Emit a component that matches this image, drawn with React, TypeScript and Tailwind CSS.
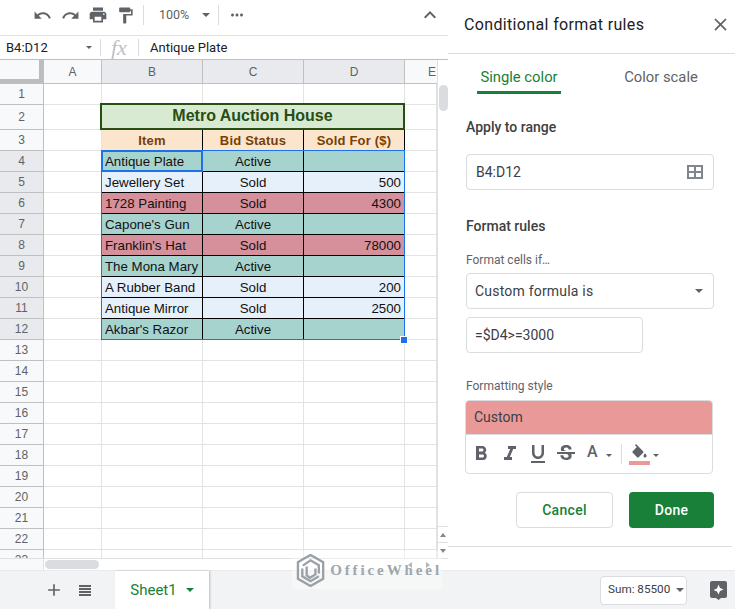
import { MdUndo, MdRedo, MdPrint, MdFormatPaint, MdKeyboardArrowUp, MdClose, MdAdd, MdFormatBold, MdFormatItalic, MdFormatUnderlined, MdStrikethroughS, MdMoreHoriz } from "react-icons/md";

const TEAL = "bg-[#a6d3cd]";
const BLUE = "bg-[#e6f0fb]";
const PINK = "bg-[#d5909c]";

const ROWS = [
    { item: "Antique Plate", status: "Active", sold: "", bg: TEAL },
    { item: "Jewellery Set", status: "Sold", sold: "500", bg: BLUE },
    { item: "1728 Painting", status: "Sold", sold: "4300", bg: PINK },
    { item: "Capone's Gun", status: "Active", sold: "", bg: TEAL },
    { item: "Franklin's Hat", status: "Sold", sold: "78000", bg: PINK },
    { item: "The Mona Mary", status: "Active", sold: "", bg: TEAL },
    { item: "A Rubber Band", status: "Sold", sold: "200", bg: BLUE },
    { item: "Antique Mirror", status: "Sold", sold: "2500", bg: BLUE },
    { item: "Akbar's Razor", status: "Active", sold: "", bg: TEAL },
];

const LINE = "border-r border-b border-[#e2e3e3]";
const BLACK = "border-r border-b border-black";

function Caret({ className }: { className: string }) {
    return <span className={"block w-0 h-0 border-x-[4px] border-x-transparent border-t-[4px] " + className} />;
}

function RowNum({ n }: { n: number }) {
    const selected = n >= 4 && n <= 12;
    return (
        <div className={"w-[44px] shrink-0 flex items-center justify-center text-[12px] text-[#5f6368] border-r border-b border-[#c0c0c0] " + (selected ? "bg-[#e8eaed]" : "bg-[#f8f9fa]")}>
            {n}
        </div>
    );
}

function SheetRow({ n }: { n: number }) {
    const height = n === 2 ? "h-[25px]" : "h-[21px]";
    return (
        <div className={"flex shrink-0 " + height}>
            <RowNum n={n} />
            <div className={"w-[58px] shrink-0 " + LINE} />
            {n === 1 || n > 12 ? (
                <>
                    <div className={"w-[101px] shrink-0 " + LINE} />
                    <div className={"w-[101px] shrink-0 " + LINE} />
                    <div className={"w-[101px] shrink-0 " + LINE} />
                </>
            ) : null}
            {n === 2 && (
                <div className="w-[305px] h-[27px] shrink-0 -ml-[2px] -mt-[2px] pb-[2px] z-10 flex items-center justify-center border-2 border-[#274e13] bg-[#d9ead3] text-[16px] font-bold text-[#274e13]">
                    Metro Auction House
                </div>
            )}
            {n === 3 && (
                <>
                    {["Item", "Bid Status", "Sold For ($)"].map((h) => (
                        <div key={h} className={"w-[101px] shrink-0 flex items-center justify-center pt-[2px] bg-[#fce5cd] text-[13px] font-bold tracking-[0.2px] text-[#783f04] " + BLACK}>
                            {h}
                        </div>
                    ))}
                </>
            )}
            {n >= 4 && n <= 12 && <DataCells n={n} />}
            <div className={"w-[32px] shrink-0 " + LINE} />
        </div>
    );
}

function DataCells({ n }: { n: number }) {
    const row = ROWS[n - 4];
    return (
        <>
            <div className={"w-[101px] shrink-0 flex items-center pl-[3px] pt-[2px] text-[13.3px] whitespace-nowrap overflow-hidden text-[#111] " + row.bg + " " + BLACK}>{row.item}</div>
            <div className={"w-[101px] shrink-0 flex items-center justify-center pt-[2px] text-[13.3px] text-[#111] " + row.bg + " " + BLACK}>{row.status}</div>
            <div className={"w-[101px] shrink-0 flex items-center justify-end pr-[3px] pt-[2px] text-[13.3px] text-[#111] " + row.bg + " " + BLACK}>{row.sold}</div>
        </>
    );
}

function Sheet() {
    const rows = Array.from({ length: 23 }, (_, i) => i + 1);
    return (
        <div className="relative flex-1 flex min-h-0 font-['Liberation_Sans',sans-serif]">
            <div className="w-[437px] shrink-0 overflow-hidden relative flex flex-col">
                {/* Column headers */}
                <div className="flex h-[24px] shrink-0 text-[12px] text-[#5f6368]">
                    <div className="w-[44px] shrink-0 bg-[#f8f9fa] border-r border-b border-[#c0c0c0] relative">
                        <div className="absolute right-0 top-0 bottom-0 w-[4px] bg-[#bdbdbd]" />
                        <div className="absolute left-0 right-0 bottom-0 h-[4px] bg-[#bdbdbd]" />
                    </div>
                    <div className="w-[58px] shrink-0 flex items-center justify-center bg-[#f8f9fa] border-r border-b border-[#c0c0c0]">A</div>
                    {["B", "C", "D"].map((c) => (
                        <div key={c} className="w-[101px] shrink-0 flex items-center justify-center bg-[#e8eaed] border-r border-b border-[#c0c0c0]">{c}</div>
                    ))}
                    <div className="w-[32px] shrink-0 flex items-center justify-end pr-[1px] bg-[#f8f9fa] border-b border-[#c0c0c0]">E</div>
                </div>
                {rows.map((n) => <SheetRow key={n} n={n} />)}
                {/* Selection over B4:D12 */}
                <div className="absolute left-[101px] top-[90px] w-[304px] h-[190px] border-[1.5px] border-[#1a73e8] pointer-events-none z-20" />
                <div className="absolute left-[101px] top-[90px] w-[102px] h-[22px] border-2 border-[#1a73e8] pointer-events-none z-20" />
                <div className="absolute left-[400px] top-[276px] w-[8px] h-[8px] bg-[#1a73e8] border border-white z-30" />
            </div>
            {/* Vertical scrollbar */}
            <div className="flex-1 flex flex-col items-center bg-white border-l border-[#e0e0e0]">
                <div className="mt-[25px] w-[9px] h-[26px] rounded-full bg-[#dadce0]" />
                <div className="mt-auto w-full h-[16px] flex items-center justify-center border-t border-[#e0e0e0]">
                    <span className="block w-0 h-0 border-x-[3px] border-x-transparent border-b-[4px] border-b-[#80868b]" />
                </div>
                <div className="w-full h-[16px] flex items-center justify-center border-t border-[#e0e0e0]">
                    <Caret className="border-t-[#80868b] !border-x-[3px]" />
                </div>
            </div>
        </div>
    );
}

function FillIcon() {
    return (
        <svg viewBox="0 0 24 20" className="w-[19px] h-[16px] fill-[#5f6368]">
            <path d="M16.56 8.94 7.62 0 6.21 1.41l2.38 2.38-5.15 5.15a1.49 1.49 0 0 0 0 2.12l5.5 5.5c.29.29.68.44 1.06.44s.77-.15 1.06-.44l5.5-5.5c.59-.58.59-1.53 0-2.12zM19 11.5s-2 2.17-2 3.5c0 1.1.9 2 2 2s2-.9 2-2c0-1.33-2-3.5-2-3.5z" />
        </svg>
    );
}

function Panel() {
    return (
        <div className="w-[287px] shrink-0 flex flex-col bg-white font-['Roboto',sans-serif] text-[#3c4043]">
            <div className="h-[54px] shrink-0 flex items-center justify-between pl-[16px] pr-[4px] pb-[4px] border-b border-[#dadce0]">
                <span className="text-[16px] tracking-[0.35px] text-[#202124]">Conditional format rules</span>
                <MdClose className="text-[#5f6368]" size={21} />
            </div>
            {/* Tabs */}
            <div className="flex h-[40px] shrink-0 pl-[29px] text-[14.8px]">
                <div className="w-[84px] flex items-center justify-center whitespace-nowrap text-[#188038] border-b-[3px] border-[#188038] pt-[10px]">Single color</div>
                <div className="ml-[64px] w-[72px] flex items-center justify-center text-[#5f6368] pt-[7px] whitespace-nowrap">Color scale</div>
            </div>
            <div className="flex flex-col px-[18px] pr-[21px]">
                <div className="mt-[23px] h-[20px] flex items-center text-[14px] font-medium">Apply to range</div>
                <div className="mt-[17px] h-[36px] flex items-center justify-between pl-[9px] pr-[10px] border border-[#dadce0] rounded text-[14px]">
                    <span>B4:D12</span>
                    <span className="grid grid-cols-2 gap-[1.5px] w-[16px] h-[14px] p-[2px] bg-[#80868b]">
                        <i className="bg-white" /><i className="bg-white" /><i className="bg-white" /><i className="bg-white" />
                    </span>
                </div>
                <div className="mt-[26px] h-[20px] flex items-center text-[14px] font-medium">Format rules</div>
                <div className="mt-[16px] h-[16px] flex items-center text-[12px] text-[#5f6368]">Format cells if…</div>
                <div className="mt-[5px] h-[36px] flex items-center justify-between pl-[8px] pr-[10px] border border-[#dadce0] rounded text-[14px] tracking-[0.2px]">
                    <span>Custom formula is</span>
                    <Caret className="border-t-[#5f6368]" />
                </div>
                <div className="mt-[8px] w-[177px] h-[36px] flex items-center px-[8px] border border-[#dadce0] rounded text-[14px]">=$D4&gt;=3000</div>
                <div className="mt-[25px] h-[16px] flex items-center text-[12px] text-[#5f6368]">Formatting style</div>
                <div className="mt-[6px] -ml-px mr-px h-[74px] flex flex-col border border-[#dadce0] rounded overflow-hidden">
                    <div className="h-[34px] shrink-0 flex items-center pl-[8px] bg-[#ea9999] text-[14px] border-b border-[#dadce0]">Custom</div>
                    <div className="flex-1 flex items-center pl-[3px] text-[#5f6368]">
                        <MdFormatBold size={24} />
                        <MdFormatItalic size={24} className="ml-[5px]" />
                        <MdFormatUnderlined size={24} className="ml-[4px]" />
                        <MdStrikethroughS size={24} className="ml-[4px]" />
                        <span className="ml-[9px] mb-[4px] text-[16px] font-medium leading-none">A</span>
                        <Caret className="ml-[8px] mt-[3px] !border-x-[3px] !border-t-[3px] border-t-[#5f6368]" />
                        <span className="ml-[9px] w-px h-[20px] bg-[#dadce0]" />
                        <div className="ml-[7px] flex flex-col items-center w-[21px]">
                            <FillIcon />
                            <span className="mt-[1px] w-full h-[4px] bg-[#ea9999]" />
                        </div>
                        <Caret className="ml-[3px] mt-[3px] !border-x-[3px] !border-t-[3px] border-t-[#5f6368]" />
                    </div>
                </div>
                <div className="mt-[18px] flex justify-end gap-[16px] text-[14px] font-medium tracking-[0.3px]">
                    <div className="w-[97px] h-[36px] flex items-center justify-center border border-[#dadce0] rounded text-[#188038]">Cancel</div>
                    <div className="w-[85px] h-[36px] flex items-center justify-center rounded bg-[#188038] text-white">Done</div>
                </div>
            </div>
            <div className="mt-[18px] mr-[3px] border-b border-[#dadce0]" />
        </div>
    );
}

function BottomBar() {
    return (
        <div className="h-[39px] shrink-0 flex items-center bg-[#f1f3f4] border-t border-[#e8eaed] font-['Roboto',sans-serif]">
            <MdAdd size={20} className="ml-[44px] text-[#5f6368]" />
            <svg viewBox="0 0 12 11" className="ml-[15px] w-[12px] h-[11px] fill-[#5f6368]">
                <rect y="0" width="12" height="2" />
                <rect y="3" width="12" height="2" />
                <rect y="6" width="12" height="2" />
                <rect y="9" width="12" height="2" />
            </svg>
            <div className="ml-[24px] w-[94px] h-full flex items-center justify-center gap-[9px] bg-white shadow-[1px_0_2px_rgba(60,64,67,0.3)] text-[15px] text-[#188038]">
                <span>Sheet1</span>
                <Caret className="border-t-[#188038]" />
            </div>
            <div className="ml-auto w-[87px] h-[29px] flex items-center pl-[7px] gap-[6px] bg-white border border-[#dadce0] rounded text-[11.7px] text-[#3c4043]">
                <span>Sum: 85500</span>
                <Caret className="border-t-[#5f6368]" />
            </div>
            <div className="ml-[23px] mr-[8px] w-[17px] h-[19px] relative">
                <svg viewBox="0 0 17 19" className="w-full h-full">
                    <path d="M2 0h13a2 2 0 0 1 2 2v13a2 2 0 0 1-2 2h-4l-2.5 2L6 17H2a2 2 0 0 1-2-2V2a2 2 0 0 1 2-2z" fill="#5f6368" />
                    <path d="M8.5 3.5l1.5 3.5 3.5 1.5-3.5 1.5-1.5 3.5L7 10.500 3.500 9 7 7.500z" fill="#fff" />
                </svg>
            </div>
        </div>
    );
}

function Watermark() {
    return (
        <div className="absolute left-[292px] top-[551px] w-[150px] h-[38px] flex items-center bg-white/40 z-40 pointer-events-none">
            <svg viewBox="0 0 30 34" className="ml-[4px] w-[30px] h-[33px] fill-none stroke-[#9aa0a6]" strokeWidth="2.4">
                <path d="M8 5 15 1 28 8.500V25.500L15 33 2 25.500V8.500L8 5" />
                <path d="M7 12 15 6.500 23.500 11.500V20" />
                <path d="M6.500 15V23L15 28 23.500 23" />
                <path d="M11 13V22L14.500 24.500 20 21V15" />
            </svg>
            <span className="ml-[5px] text-[15px] font-bold tracking-[2.9px] text-[#a0a6ac] font-['Liberation_Serif',serif]">OfficeWheel</span>
        </div>
    );
}

export default function App() {
    return (
        <div className="relative w-[735px] h-[609px] overflow-hidden flex flex-col bg-white">
            <div className="flex flex-1 min-h-0">
                <div className="w-[448px] shrink-0 flex flex-col">
                    {/* Toolbar */}
                    <div className="h-[36px] shrink-0 flex items-center pb-[5px] border-b border-[#e0e0e0] text-[#5f6368] font-['Roboto',sans-serif]">
                        <MdUndo size={19} className="ml-[33px]" />
                        <MdRedo size={19} className="ml-[9px]" />
                        <MdPrint size={20} className="ml-[8px]" />
                        <MdFormatPaint size={19} className="ml-[8px]" />
                        <span className="ml-[8px] w-px h-[20px] bg-[#dadce0]" />
                        <span className="ml-[15px] w-[30px] text-[12.5px]">100%</span>
                        <Caret className="ml-[13px] border-t-[#5f6368]" />
                        <span className="ml-[8px] w-px h-[20px] bg-[#dadce0]" />
                        <MdMoreHoriz size={18} className="ml-[9px]" />
                        <MdKeyboardArrowUp size={24} className="ml-[172px]" />
                    </div>
                    {/* Formula bar */}
                    <div className="h-[24px] shrink-0 flex items-center border-b border-[#c0c0c0] font-['Roboto',sans-serif] text-[13px] text-[#202124]">
                        <span className="ml-[6px] w-[80px]">B4:D12</span>
                        <Caret className="!border-x-[3px] !border-t-[3px] border-t-[#5f6368]" />
                        <span className="ml-[8px] w-px h-[17px] bg-[#dadce0]" />
                        <span className="ml-[10px] w-[27px] text-[22px] leading-none italic text-[#bdc1c6] font-['Liberation_Serif',serif]">fx</span>
                        <span className="w-px h-[17px] bg-[#dadce0]" />
                        <span className="ml-[11px]">Antique Plate</span>
                    </div>
                    <Sheet />
                    {/* Horizontal scrollbar */}
                    <div className="h-[12px] shrink-0 flex items-center border-t border-[#e0e0e0]">
                        <div className="w-[44px] h-full bg-[#f8f9fa] border-r border-[#e0e0e0]" />
                        <div className="ml-[1px] w-[54px] h-[9px] rounded-full bg-[#dadce0]" />
                        <span className="ml-auto block w-0 h-0 border-y-[3px] border-y-transparent border-r-[4px] border-r-[#80868b]" />
                        <span className="ml-[14px] mr-[18px] block w-0 h-0 border-y-[3px] border-y-transparent border-l-[4px] border-l-[#80868b]" />
                    </div>
                </div>
                <Panel />
            </div>
            <BottomBar />
            <Watermark />
        </div>
    );
}
